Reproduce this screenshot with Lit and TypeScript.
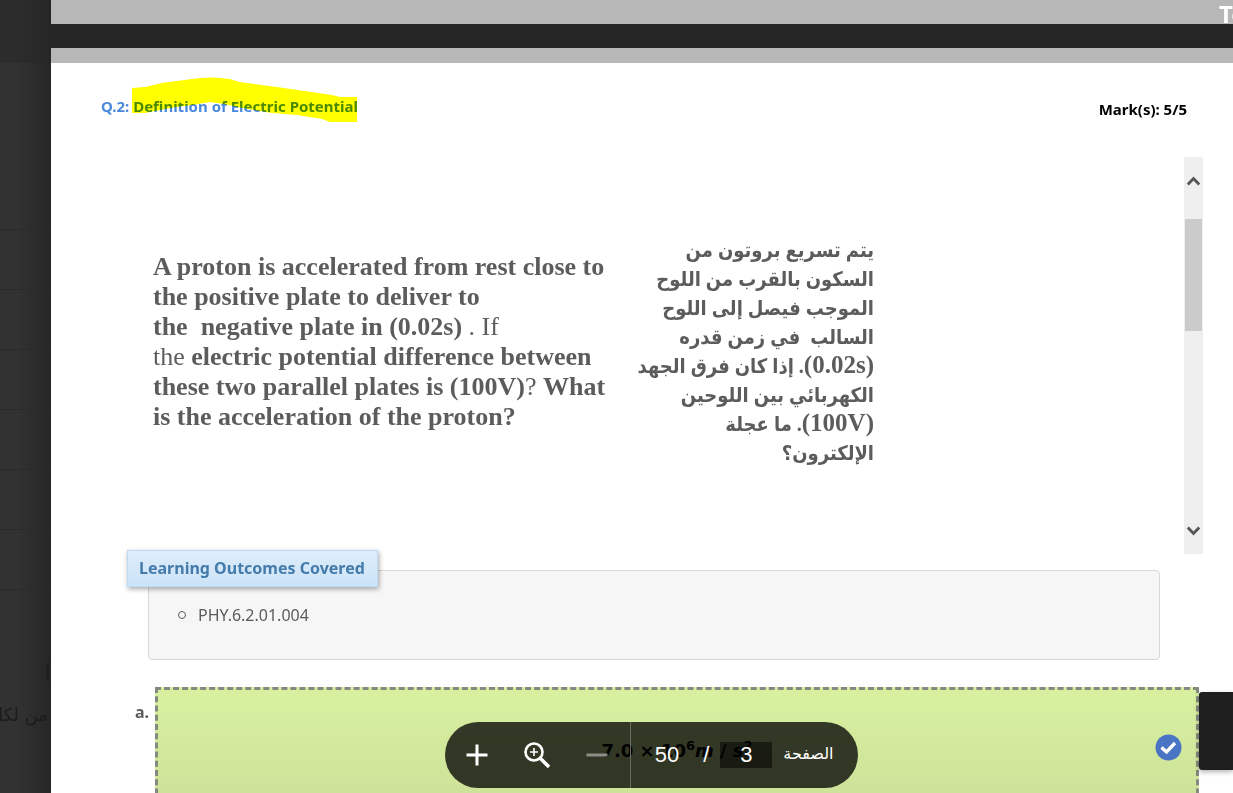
import { LitElement, html, css } from "lit";
import { customElement, state } from "lit/decorators.js";

@customElement("viewer-toolbar")
class ViewerToolbar extends LitElement {
  static styles = css`
    :host {
      display: flex;
      align-items: center;
      box-sizing: border-box;
      height: 66px;
      width: 413px;
      padding: 0 24px 0 2px;
      border-radius: 33px;
      background: rgba(0, 0, 0, 0.76);
      color: #fff;
      font-family: "Liberation Sans", "DejaVu Sans", sans-serif;
      font-size: 22px;
    }
    .tool {
      display: flex;
      align-items: center;
      justify-content: center;
      width: 60px;
      height: 66px;
      padding: 0;
      border: 0;
      background: none;
      color: #fff;
      cursor: pointer;
    }
    .tool:disabled {
      color: #8d8f86;
    }
    .divider {
      width: 1px;
      height: 66px;
      margin-left: 3px;
      background: #686b5e;
    }
    .pages {
      display: flex;
      flex: 1;
      align-items: center;
      justify-content: flex-end;
    }
    .slash {
      box-sizing: border-box;
      width: 41px;
      padding-right: 11px;
      text-align: right;
    }
    .current {
      box-sizing: border-box;
      width: 52px;
      height: 26px;
      padding: 0;
      border: 0;
      background: rgba(0, 0, 0, 0.5);
      color: #fff;
      font: inherit;
      text-align: center;
    }
    .label {
      margin-left: 11px;
      padding-bottom: 3px;
      font-family: "DejaVu Sans", sans-serif;
      font-size: 16px;
      font-weight: 400;
    }
  `;
  @state() page = 3;
  render() {
    return html`
      <button class="tool" aria-label="Zoom in">
        <svg width="22" height="22" viewBox="0 0 22 22" fill="none" stroke="currentColor" stroke-width="3">
          <path d="M11 0.5v21M0.5 11h21" />
        </svg>
      </button>
      <button class="tool" aria-label="Fit">
        <svg width="28" height="28" viewBox="0 0 28 28" fill="none" stroke="currentColor">
          <circle cx="11" cy="11" r="8.5" stroke-width="2.6" />
          <path d="M17 17l9 9" stroke-width="3.6" />
          <path d="M11 7v8M7 11h8" stroke-width="1.6" />
        </svg>
      </button>
      <button class="tool" aria-label="Zoom out" disabled>
        <svg width="22" height="22" viewBox="0 0 22 22" fill="none" stroke="currentColor" stroke-width="3">
          <path d="M0.5 11h21" />
        </svg>
      </button>
      <span class="divider"></span>
      <div class="pages">
        <span>50</span>
        <span class="slash">/</span>
        <input class="current" id="page" .value=${String(this.page)} />
        <label class="label" for="page" dir="rtl">الصفحة</label>
      </div>
    `;
  }
}

@customElement("app-root")
class AppRoot extends LitElement {
  static styles = css`
    :host {
      display: grid;
      grid-template-columns: 51px 1fr;
      position: relative;
      height: 100vh;
      overflow: hidden;
      background: #262626;
      color: #5c5c5c;
      font-family: "Noto Sans", "Open Sans", sans-serif;
      font-size: 16px;
    }
    .side {
      overflow: hidden;
      background: linear-gradient(90deg, rgba(38, 38, 38, 0) 35%, #262626 100%), #323232;
    }
    .side-top {
      height: 63px;
      background: rgba(38, 38, 38, 0.5);
    }
    .rows {
      margin: 0;
      padding: 107px 0 0;
      list-style: none;
    }
    .rows li {
      box-sizing: border-box;
      height: 60px;
      border-bottom: 1px solid #2b2b2b;
    }
    .side-text {
      color: #1d1d1d;
      direction: rtl;
      font-family: "DejaVu Sans", sans-serif;
      white-space: nowrap;
    }
    .side-title {
      margin: 69px 0 0;
      font-size: 24px;
      line-height: 28px;
    }
    .side-line {
      margin: 14px 0 0;
      padding-right: 3px;
      font-size: 18px;
      line-height: 28px;
    }
    .doc {
      display: flex;
      flex-direction: column;
      gap: 24px;
      min-width: 0;
      overflow: hidden;
    }
    .prev {
      flex: none;
      height: 24px;
      overflow: hidden;
      background: #b7b7b7;
      color: #fff;
      font-size: 24px;
      font-weight: 700;
      line-height: 28px;
      white-space: nowrap;
    }
    .prev span {
      display: block;
      width: 14px;
      margin-left: auto;
    }
    .page {
      flex: 1;
      border-top: 15px solid #b7b7b7;
      background: #fff;
    }
    .head {
      display: flex;
      justify-content: space-between;
      padding: 32px 46px 0 50px;
    }
    .title {
      position: relative;
      margin: 0;
      color: #4a89dc;
      font-size: 15px;
      line-height: 22px;
    }
    .marker {
      position: absolute;
      left: 31px;
      top: -18px;
      mix-blend-mode: multiply;
    }
    .marks {
      padding-top: 3px;
      color: #000;
      font-size: 15px;
      font-weight: 700;
      line-height: 22px;
    }
    .question {
      display: flex;
      height: 397px;
      margin: 37px 30px 0 102px;
    }
    .en {
      width: 460px;
      margin: 0;
      padding-top: 95px;
      font-family: "Liberation Serif", serif;
      font-size: 26px;
      line-height: 30px;
      white-space: nowrap;
    }
    .ar {
      width: 261px;
      margin: 0;
      padding-top: 79px;
      font-family: "Liberation Serif", "DejaVu Sans Condensed", "DejaVu Sans", serif;
      font-size: 20px;
      font-weight: 700;
      line-height: 29px;
      white-space: nowrap;
    }
    .ar bdi {
      font-size: 25px;
      line-height: 20px;
    }
    .scroll {
      display: flex;
      flex-direction: column;
      width: 19px;
      margin-left: auto;
      background: #efefef;
    }
    .arrow {
      height: 47px;
      padding: 0;
      border: 0;
      background: none;
      line-height: 0;
    }
    .track {
      flex: 1;
      padding: 15px 1px 0;
    }
    .thumb {
      height: 112px;
      background: #cbcbcb;
    }
    .outcomes {
      margin: -4px 73px 0 76px;
    }
    .legend {
      position: relative;
      width: fit-content;
      margin: 0;
      padding: 5px 12px 6px 11px;
      border: 1px solid #bfdcf4;
      background: linear-gradient(#deedfa, #cbe3f7);
      box-shadow: 1px 2px 5px rgba(0, 0, 0, 0.35);
      color: #447bab;
      font-size: 16px;
      line-height: 24px;
    }
    .box {
      box-sizing: border-box;
      height: 90px;
      margin: -17px 0 0 21px;
      padding: 32px 0 0 29px;
      border: 1px solid #d8d8d8;
      border-radius: 4px;
      background: #f6f6f6;
    }
    .box ul {
      margin: 0;
      padding: 0;
      list-style: none;
      line-height: 24px;
    }
    .box li {
      display: flex;
      align-items: center;
      gap: 12px;
    }
    .dot {
      width: 6px;
      height: 6px;
      border: 1px solid #5c5c5c;
      border-radius: 50%;
    }
    .answer {
      display: grid;
      grid-template-columns: 20px 1fr;
      margin: 27px 34px 0 84px;
    }
    .letter {
      padding-top: 13px;
      font-weight: 700;
      line-height: 24px;
    }
    .choice {
      display: flex;
      position: relative;
      box-sizing: border-box;
      height: 126px;
      justify-content: center;
      align-items: center;
      border: 3px dashed #858a80;
      background: linear-gradient(#d8f1a0, #cce098) border-box;
    }
    .formula {
      color: #000;
      font-family: "DejaVu Sans", sans-serif;
      font-size: 18px;
      font-weight: 700;
      white-space: nowrap;
    }
    .formula sup {
      font-size: 13px;
      line-height: 0;
    }
    .check {
      position: absolute;
      right: 14px;
      top: 44px;
    }
    .tab {
      position: absolute;
      right: 0;
      bottom: 23px;
      width: 34px;
      height: 78px;
      border-radius: 3px 0 0 3px;
      background: #1f1f1f;
      box-shadow: 0 2px 5px rgba(0, 0, 0, 0.3);
    }
    .toolbar {
      position: absolute;
      left: calc(50% - 172px);
      bottom: 5px;
    }
  `;
  render() {
    return html`
      <aside class="side">
        <div class="side-top"></div>
        <ul class="rows">
          ${[1, 2, 3, 4, 5, 6, 7].map(() => html`<li></li>`)}
        </ul>
        <p class="side-text side-title">ا</p>
        <p class="side-text side-line">من لكل</p>
      </aside>
      <main class="doc">
        <div class="prev"><span>To</span></div>
        <section class="page">
          <header class="head">
            <h2 class="title">
              Q.2: Definition of Electric Potential
              <svg class="marker" width="226" height="46" viewBox="0 0 226 46">
                <path
                  fill="#ff0"
                  d="M0 11L13 10L30 6L60 2Q78-1 98 2L107 5L145 10L200 18L208 20L225 20V45H198L190 42L165 38L140 36L105 30L92 27L78 25L60 28L38 31L13 36H0Z"
                />
              </svg>
            </h2>
            <div class="marks">Mark(s): 5/5</div>
          </header>
          <div class="question">
            <p class="en">
              <b>A proton is accelerated from rest close to</b><br />
              <b>the positive plate to deliver to</b><br />
              <b>the &nbsp;negative plate in (0.02s)</b> . If<br />
              the <b>electric potential difference between</b><br />
              <b>these two parallel plates is (100V)</b>? <b>What</b><br />
              <b>is the acceleration of the proton?</b>
            </p>
            <p class="ar" dir="rtl" lang="ar">
              يتم تسريع بروتون من<br />
              السكون بالقرب من اللوح<br />
              الموجب فيصل إلى اللوح<br />
              السالب &nbsp;في زمن قدره<br />
              <bdi>(0.02s)</bdi>. إذا كان فرق الجهد<br />
              الكهربائي بين اللوحين<br />
              <bdi>(100V)</bdi>. ما عجلة<br />
              الإلكترون؟
            </p>
            <div class="scroll">
              <button class="arrow" aria-label="Up">
                <svg width="13" height="10" viewBox="0 0 13 10" fill="none" stroke="#555" stroke-width="2.8">
                  <path d="M0.8 8.5L6.5 2.5L12.2 8.5" />
                </svg>
              </button>
              <div class="track"><div class="thumb"></div></div>
              <button class="arrow" aria-label="Down">
                <svg width="13" height="10" viewBox="0 0 13 10" fill="none" stroke="#555" stroke-width="2.8">
                  <path d="M0.8 1.5L6.5 7.5L12.2 1.5" />
                </svg>
              </button>
            </div>
          </div>
          <section class="outcomes">
            <h3 class="legend">Learning Outcomes Covered</h3>
            <div class="box">
              <ul>
                <li><span class="dot"></span>PHY.6.2.01.004</li>
              </ul>
            </div>
          </section>
          <div class="answer">
            <span class="letter">a.</span>
            <div class="choice">
              <span class="formula">7.0 × 10<sup>6</sup><i>m</i> / <i>s</i><sup>2</sup></span>
              <svg class="check" width="27" height="27" viewBox="0 0 27 27">
                <circle cx="13.5" cy="13.5" r="13" fill="#4a74c4" />
                <path d="M6.5 13.5L11.5 18L20 9" fill="none" stroke="#fff" stroke-width="3.4" />
              </svg>
            </div>
          </div>
        </section>
      </main>
      <div class="tab"></div>
      <viewer-toolbar class="toolbar"></viewer-toolbar>
    `;
  }
}
